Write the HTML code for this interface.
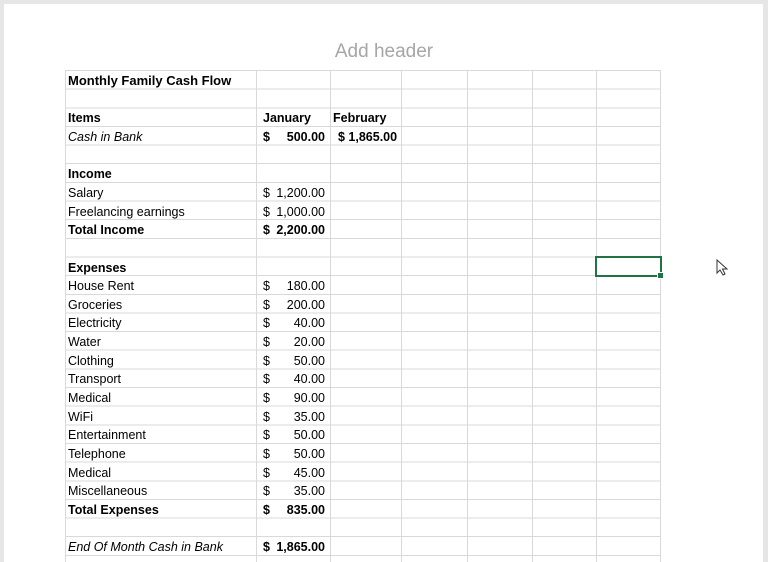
<!DOCTYPE html>
<html><head><meta charset="utf-8"><style>
html,body{margin:0;padding:0;overflow:hidden}
body{width:768px;height:562px;overflow:hidden;background:#e6e6e6;position:relative;font-family:"Liberation Sans",sans-serif;}
#page{position:absolute;left:4px;top:4px;width:759px;height:558px;background:#fff;}
#hdr{position:absolute;left:0;width:768px;top:41px;text-align:center;font-size:19px;color:#a6a6a6;}
#grid{position:absolute;left:65px;top:70px;width:596px;height:492px;
background:
linear-gradient(to right,#d9d9d9 1px,transparent 1px) 0 0/1px 100% no-repeat,
linear-gradient(to right,#d9d9d9 1px,transparent 1px) 191px 0/1px 100% no-repeat,
linear-gradient(to right,#d9d9d9 1px,transparent 1px) 265px 0/1px 100% no-repeat,
linear-gradient(to right,#d9d9d9 1px,transparent 1px) 336px 0/1px 100% no-repeat,
linear-gradient(to right,#d9d9d9 1px,transparent 1px) 402px 0/1px 100% no-repeat,
linear-gradient(to right,#d9d9d9 1px,transparent 1px) 467px 0/1px 100% no-repeat,
linear-gradient(to right,#d9d9d9 1px,transparent 1px) 531px 0/1px 100% no-repeat,
linear-gradient(to right,#d9d9d9 1px,transparent 1px) 595px 0/1px 100% no-repeat,
repeating-linear-gradient(to bottom,#d9d9d9 0,#d9d9d9 1px,transparent 1px,transparent 18.65px);}
.r{position:absolute;left:65px;width:596px;height:18.65px;font-size:12.5px;line-height:18.65px;color:#000;}
.a{position:absolute;left:3px;top:2px;white-space:nowrap}
.d{position:absolute;left:198px;top:2px}
.n{position:absolute;right:336px;top:2px}
.f{position:absolute;left:273px;top:2px;white-space:nowrap}
b{font-weight:bold;font-size:12.5px}
i{font-style:italic}
#sel{position:absolute;left:595px;top:256px;width:63px;height:17px;border:2px solid #217346;}
#sel:after{content:"";position:absolute;right:-4px;bottom:-4px;width:5px;height:5px;background:#217346;border:1px solid #fff}
</style></head><body>
<div id="page"></div>
<div id="hdr">Add header</div>
<div id="grid"></div>
<div class="r" style="top:70px"><b class="a" style="font-size:13px">Monthly Family Cash Flow</b></div>
<div class="r" style="top:107.3px"><b class="a">Items</b><b class="d">January</b><b class="f" style="left:268px">February</b></div>
<div class="r" style="top:125.95px"><i class="a">Cash in Bank</i><b class="d">$</b><b class="n">500.00</b><b class="f">$ 1,865.00</b></div>
<div class="r" style="top:163.25px"><b class="a">Income</b></div>
<div class="r" style="top:181.9px"><span class="a">Salary</span><span class="d">$</span><span class="n">1,200.00</span></div>
<div class="r" style="top:200.55px"><span class="a">Freelancing earnings</span><span class="d">$</span><span class="n">1,000.00</span></div>
<div class="r" style="top:219.2px"><b class="a">Total Income</b><b class="d">$</b><b class="n">2,200.00</b></div>
<div class="r" style="top:256.5px"><b class="a">Expenses</b></div>
<div class="r" style="top:275.15px"><span class="a">House Rent</span><span class="d">$</span><span class="n">180.00</span></div>
<div class="r" style="top:293.8px"><span class="a">Groceries</span><span class="d">$</span><span class="n">200.00</span></div>
<div class="r" style="top:312.45px"><span class="a">Electricity</span><span class="d">$</span><span class="n">40.00</span></div>
<div class="r" style="top:331.1px"><span class="a">Water</span><span class="d">$</span><span class="n">20.00</span></div>
<div class="r" style="top:349.75px"><span class="a">Clothing</span><span class="d">$</span><span class="n">50.00</span></div>
<div class="r" style="top:368.4px"><span class="a">Transport</span><span class="d">$</span><span class="n">40.00</span></div>
<div class="r" style="top:387.05px"><span class="a">Medical</span><span class="d">$</span><span class="n">90.00</span></div>
<div class="r" style="top:405.7px"><span class="a">WiFi</span><span class="d">$</span><span class="n">35.00</span></div>
<div class="r" style="top:424.35px"><span class="a">Entertainment</span><span class="d">$</span><span class="n">50.00</span></div>
<div class="r" style="top:443px"><span class="a">Telephone</span><span class="d">$</span><span class="n">50.00</span></div>
<div class="r" style="top:461.65px"><span class="a">Medical</span><span class="d">$</span><span class="n">45.00</span></div>
<div class="r" style="top:480.3px"><span class="a">Miscellaneous</span><span class="d">$</span><span class="n">35.00</span></div>
<div class="r" style="top:498.95px"><b class="a">Total Expenses</b><b class="d">$</b><b class="n">835.00</b></div>
<div class="r" style="top:536.25px"><i class="a">End Of Month Cash in Bank</i><b class="d">$</b><b class="n">1,865.00</b></div>
<div id="sel"></div>
<svg style="position:absolute;left:716px;top:259px" width="14" height="18" viewBox="0 0 14 18"><path d="M1 1 L1 14 L4 11 L7 16 L9 15 L6.5 10 L11 10 Z" fill="#fff" stroke="#333" stroke-width="1"/></svg>
</body></html>
